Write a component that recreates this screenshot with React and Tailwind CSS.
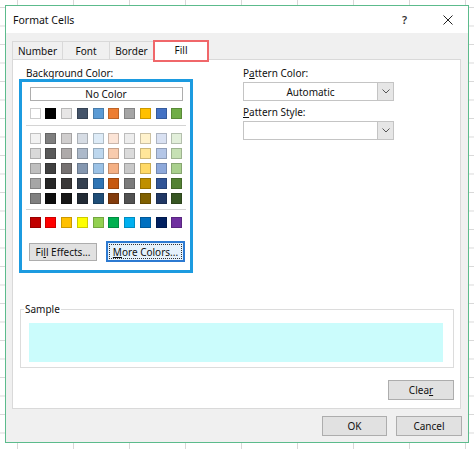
import React from "react";

const theme = ["#FFFFFF", "#000000", "#E7E6E6", "#44546A", "#5B9BD5", "#ED7D31", "#A5A5A5", "#FFC000", "#4472C4", "#70AD47"];
const tints = [
  ["#F2F2F2", "#7F7F7F", "#D0CECE", "#D6DCE4", "#DDEBF7", "#FCE4D6", "#EDEDED", "#FFF2CC", "#D9E1F2", "#E2EFDA"],
  ["#D9D9D9", "#595959", "#AEAAAA", "#ACB9CA", "#BDD7EE", "#F8CBAD", "#DBDBDB", "#FFE699", "#B4C6E7", "#C6E0B4"],
  ["#BFBFBF", "#404040", "#757171", "#8497B0", "#9BC2E6", "#F4B084", "#C9C9C9", "#FFD966", "#8EA9DB", "#A9D08E"],
  ["#A6A6A6", "#262626", "#3A3838", "#333F4F", "#2F75B5", "#C65911", "#7B7B7B", "#BF8F00", "#305496", "#548235"],
  ["#808080", "#0D0D0D", "#161616", "#222B35", "#1F4E78", "#833C0C", "#525252", "#806000", "#203764", "#375623"],
];
const standard = ["#C00000", "#FF0000", "#FFC000", "#FFFF00", "#92D050", "#00B050", "#00B0F0", "#0070C0", "#002060", "#7030A0"];

function Swatch({ c }) {
  return <div className="w-[11px] h-[11px] border border-black/20" style={{ backgroundColor: c }} />;
}

function Row({ colors }) {
  return (
    <div className="flex justify-between w-[153px]">
      {colors.map((c, i) => (
        <Swatch key={i} c={c} />
      ))}
    </div>
  );
}

function Chevron() {
  return (
    <div className="w-[16px] h-full bg-[#e6e6e6] border-l border-[#c4c4c4] flex items-center justify-center">
      <svg width="8" height="5" viewBox="0 0 8 5">
        <path d="M0.5 0.5 L4 4 L7.5 0.5" fill="none" stroke="#555" strokeWidth="1" />
      </svg>
    </div>
  );
}

function Btn({ children, className = "" }) {
  return (
    <div className={"flex items-center justify-center bg-[#e1e1e1] border border-[#adadad] text-[#111] " + className}>
      {children}
    </div>
  );
}

export default function App() {
  return (
    <div
      className="w-[474px] h-[449px] overflow-hidden bg-white pt-[5px] pl-[5px] bg-[linear-gradient(to_right,#d8d8d8_1px,transparent_1px),linear-gradient(to_bottom,#d8d8d8_1px,transparent_1px)] bg-[size:56px_18.5px] bg-[position:17px_7px]"
      style={{ fontFamily: '"Segoe UI", "Noto Sans", sans-serif' }}
    >
      <div className="w-[464px] h-[438px] border border-[#5cbb8c] bg-[#f0f0f0] flex flex-col text-[10px] leading-[12px] text-[#111]">
        {/* Title bar */}
        <div className="h-[27px] bg-white flex items-center pl-[7px] shrink-0">
          <span className="text-[10.5px]">Format Cells</span>
          <span className="ml-auto mr-[36px] text-[11px] font-semibold text-[#333]">?</span>
          <svg width="10" height="10" viewBox="0 0 10 10" className="mr-[15px]">
            <path d="M0.5 0.5 L9.5 9.5 M9.5 0.5 L0.5 9.5" stroke="#222" strokeWidth="1" />
          </svg>
        </div>

        {/* Tabs */}
        <div className="flex items-end ml-[6px] mt-[5px] h-[21px] shrink-0">
          <div className="w-[50px] h-[18px] border-t border-l border-[#d9d9d9] flex items-center justify-center">Number</div>
          <div className="w-[47px] h-[18px] border-t border-l border-[#d9d9d9] flex items-center justify-center">Font</div>
          <div className="w-[44px] h-[18px] border-t border-l border-[#d9d9d9] flex items-center justify-center">Border</div>
          <div className="relative z-10 w-[56px] h-[22px] -mb-[3px] bg-white border-2 border-[#f0676a] flex items-center justify-center pb-[2px]">
            Fill
          </div>
        </div>

        {/* Panel */}
        <div className="ml-[6px] w-[449px] h-[350px] bg-white border border-[#d9d9d9] flex flex-col shrink-0">
          <div className="flex">
            {/* Left */}
            <div className="flex flex-col ml-[6px]">
              <div className="mt-[7px] ml-[7px] h-[12px]">Background Color:</div>
              <div className="w-[174px] h-[194px] border-[3px] border-[#1c9be0] flex flex-col items-center">
                <div className="mt-[5px] w-[153px] h-[14px] border border-[#adadad] flex items-center justify-center">No Color</div>
                <div className="mt-[7px]">
                  <Row colors={theme} />
                </div>
                <div className="mt-[6px] w-[160px] h-px bg-[#d4d4d4]" />
                <div className="mt-[7px] flex flex-col gap-[4px]">
                  {tints.map((r, i) => (
                    <Row key={i} colors={r} />
                  ))}
                </div>
                <div className="mt-[5px] w-[160px] h-px bg-[#d4d4d4]" />
                <div className="mt-[7px]">
                  <Row colors={standard} />
                </div>
                <div className="mt-[13px] w-[158px] flex justify-between items-center">
                  <Btn className="w-[68px] h-[18px] ml-[2px]">
                    <span>
                      Fi<span className="underline">l</span>l Effects...
                    </span>
                  </Btn>
                  <div className="w-[79px] h-[21px] border-2 border-[#2c7ad2] bg-[#e5f1fb] p-[1px]">
                    <div className="w-full h-full border border-dotted border-[#333] flex items-center justify-center">
                      <span>
                        <span className="underline">M</span>ore Colors...
                      </span>
                    </div>
                  </div>
                </div>
              </div>
            </div>
            {/* Right */}
            <div className="flex flex-col ml-[50px]">
              <div className="mt-[7px] h-[12px]">
                P<span className="underline">a</span>ttern Color:
              </div>
              <div className="mt-[3px] w-[151px] h-[19px] border border-[#c4c4c4] flex items-center">
                <div className="flex-1 text-center">Automatic</div>
                <Chevron />
              </div>
              <div className="mt-[5px] h-[12px]">
                <span className="underline">P</span>attern Style:
              </div>
              <div className="mt-[3px] w-[151px] h-[19px] border border-[#c4c4c4] flex items-center justify-end">
                <Chevron />
              </div>
            </div>
          </div>

          {/* Sample */}
          <fieldset className="mt-[30px] ml-[7px] w-[434px] border border-[#dcdcdc] pb-[5px]">
            <legend className="ml-[3px] px-[1px] leading-[12px]">Sample</legend>
            <div className="mt-[8px] ml-[8px] w-[414px] h-[39px] bg-[#cbfcfc]" />
          </fieldset>

          <div className="mt-auto mb-[8px] mr-[6px] flex justify-end">
            <Btn className="w-[66px] h-[20px]">
              <span>
                Clea<span className="underline">r</span>
              </span>
            </Btn>
          </div>
        </div>

        {/* Footer */}
        <div className="mt-[7px] mr-[6px] flex justify-end gap-[9px]">
          <Btn className="w-[65px] h-[20px]">OK</Btn>
          <Btn className="w-[66px] h-[20px]">Cancel</Btn>
        </div>
      </div>
    </div>
  );
}
